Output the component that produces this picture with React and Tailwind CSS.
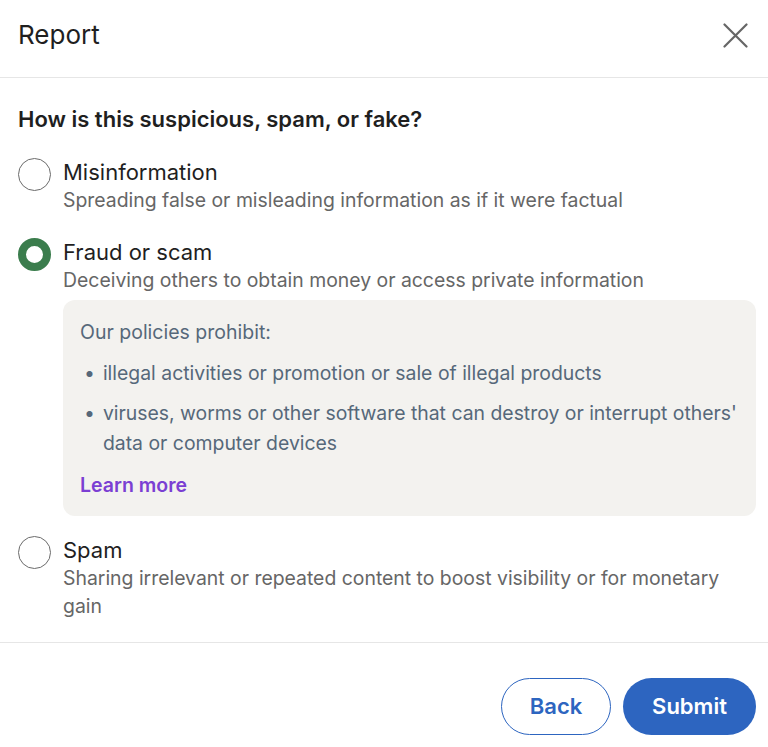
import React from "react";

function Radio({ checked }) {
  if (checked) {
    return (
      <div className="w-[33px] h-[33px] rounded-full border-[8px] border-[#3b7d4d] bg-white shrink-0" />
    );
  }
  return <div className="w-[33px] h-[33px] rounded-full border-[1.5px] border-[#6b6b6b] bg-white shrink-0" />;
}

function Option({ checked, title, desc, children, className }) {
  return (
    <div className={"flex gap-[12px] " + (className || "")}>
      <div className="pt-[4px]">
        <Radio checked={checked} />
      </div>
      <div className="flex-1">
        <div className="text-[22px] leading-[32px] pt-[2px] -mb-[2px] text-[#1f1f1f]">{title}</div>
        <div className="text-[19.4px] leading-[28px] text-[#666666]">{desc}</div>
        {children}
      </div>
    </div>
  );
}

export default function App() {
  return (
    <div className="w-[768px] h-[747px] bg-white flex flex-col" style={{ fontFamily: "Inter, 'Noto Sans', sans-serif" }}>
      <div className="h-[78px] shrink-0 flex items-center justify-between pl-[18px] pr-[20px] border-b border-[#e6e6e6]">
        <div className="text-[26px] text-[#1f1f1f] pb-[8px]">Report</div>
        <svg width="25" height="25" viewBox="0 0 25 25" className="mb-[6px]">
          <path d="M1.5 1.5 L23.5 23.5 M23.5 1.5 L1.5 23.5" stroke="#666666" strokeWidth="2.2" strokeLinecap="round" />
        </svg>
      </div>
      <div className="flex-1 pl-[18px] pr-[12px] pt-[25px] flex flex-col">
        <div className="text-[22px] leading-[32px] font-semibold text-[#1f1f1f] mb-[19px]">How is this suspicious, spam, or fake?</div>
        <Option checked={false} title="Misinformation" desc="Spreading false or misleading information as if it were factual" />
        <Option className="mt-[20px]" checked={true} title="Fraud or scam" desc="Deceiving others to obtain money or access private information">
          <div className="mt-[6px] rounded-[12px] bg-[#f3f2ef] px-[17px] pt-[18px] pb-[16px] text-[#56687a]">
            <div className="text-[19.5px] leading-[28px]">Our policies prohibit:</div>
            <ul className="mt-[12px] pl-[4px] flex flex-col gap-[10px]">
              <li className="flex gap-[8px] text-[19.4px] leading-[30px]">
                <span>•</span>
                <span>illegal activities or promotion or sale of illegal products</span>
              </li>
              <li className="flex gap-[8px] text-[19.4px] leading-[30px]">
                <span>•</span>
                <span>viruses, worms or other software that can destroy or interrupt others' data or computer devices</span>
              </li>
            </ul>
            <div className="mt-[12px] text-[19.5px] leading-[30px] font-semibold text-[#7b3fd3]">Learn more</div>
          </div>
        </Option>
        <Option className="mt-[16px]" checked={false} title="Spam" desc="Sharing irrelevant or repeated content to boost visibility or for monetary gain" />
      </div>
      <div className="h-[105px] shrink-0 border-t border-[#e6e6e6] flex items-start justify-end gap-[12px] pr-[12px] pt-[35px]">
        <button className="h-[57px] w-[110px] rounded-full border-[1.5px] border-[#2d65c0] text-[#2d65c0] text-[22px] font-semibold">Back</button>
        <button className="h-[57px] w-[133px] rounded-full bg-[#2d65c0] text-white text-[22px] font-semibold">Submit</button>
      </div>
    </div>
  );
}
